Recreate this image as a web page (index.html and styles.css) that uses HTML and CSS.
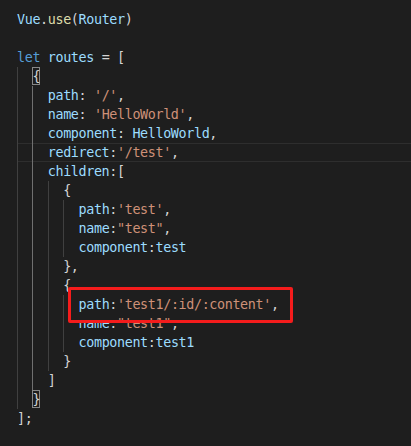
FILE: index.html
```html
<!DOCTYPE html>
<html>
<head>
<meta charset="utf-8">
<link rel="stylesheet" href="styles.css">
</head>
<body>
<div class="editor">
<div class="ln"><span class="v">Vue</span>.<span class="f">use</span>(<span class="v">Router</span>)</div>
<div class="ln"></div>
<div class="ln"><span class="k">let</span> <span class="v">routes</span> = [</div>
<div class="ln"><span class="g">  </span><span class="m">{</span></div>
<div class="ln"><span class="g">  </span><span class="g a">  </span><span class="v">path</span>: <span class="s">'/'</span>,</div>
<div class="ln"><span class="g">  </span><span class="g a">  </span><span class="v">name</span>: <span class="s">'HelloWorld'</span>,</div>
<div class="ln"><span class="g">  </span><span class="g a">  </span><span class="v">component</span>: <span class="v">HelloWorld</span>,</div>
<div class="ln cur"><span class="g">  </span><span class="g a">  </span><span class="v">redirect</span>:<span class="s">'/test'</span>,</div>
<div class="ln"><span class="g">  </span><span class="g a">  </span><span class="v">children</span>:[</div>
<div class="ln"><span class="g">  </span><span class="g a">  </span><span class="g">  </span>{</div>
<div class="ln"><span class="g">  </span><span class="g a">  </span><span class="g">  </span><span class="g">  </span><span class="v">path</span>:<span class="s">'test'</span>,</div>
<div class="ln"><span class="g">  </span><span class="g a">  </span><span class="g">  </span><span class="g">  </span><span class="v">name</span>:<span class="s">"test"</span>,</div>
<div class="ln"><span class="g">  </span><span class="g a">  </span><span class="g">  </span><span class="g">  </span><span class="v">component</span>:<span class="v">test</span></div>
<div class="ln"><span class="g">  </span><span class="g a">  </span><span class="g">  </span>},</div>
<div class="ln"><span class="g">  </span><span class="g a">  </span><span class="g">  </span>{</div>
<div class="ln"><span class="g">  </span><span class="g a">  </span><span class="g">  </span><span class="g">  </span><span class="v">path</span>:<span class="s">'test1/:id/:content'</span>,</div>
<div class="ln"><span class="g">  </span><span class="g a">  </span><span class="g">  </span><span class="g">  </span><span class="v">name</span>:<span class="s">"test1"</span>,</div>
<div class="ln"><span class="g">  </span><span class="g a">  </span><span class="g">  </span><span class="g">  </span><span class="v">component</span>:<span class="v">test1</span></div>
<div class="ln"><span class="g">  </span><span class="g a">  </span><span class="g">  </span>}</div>
<div class="ln"><span class="g">  </span><span class="g a">  </span>]</div>
<div class="ln"><span class="g">  </span><span class="m">}</span></div>
<div class="ln">];</div>
<div class="mark"></div>
</div>
</body>
</html>
```

FILE: styles.css
```css
html, body {
  margin: 0;
  padding: 0;
  background: #1e1e1e;
}
body {
  width: 411px;
  height: 446px;
  overflow: hidden;
}
.editor {
  position: relative;
  padding: 10px 0 0 17px;
  font-family: "DejaVu Sans Mono", "Liberation Mono", monospace;
  font-size: 13.4px;
  letter-spacing: -0.37px;
  color: #d4d4d4;
}
.ln {
  height: 19px;
  line-height: 19px;
  white-space: pre;
}
.cur {
  box-shadow: inset 0 1px #2e2e2e, inset 0 -1px #2e2e2e;
}
.v { color: #9cdcfe; }
.f { color: #dcdcaa; }
.k { color: #569cd6; }
.s { color: #ce9178; }
.g {
  display: inline-block;
  height: 19px;
  vertical-align: top;
  background: linear-gradient(to right, #404040 1px, transparent 1px);
}
.g.a {
  background: linear-gradient(to right, #707070 1px, transparent 1px);
}
.m {
  display: inline-block;
  height: 18px;
  vertical-align: top;
  box-shadow: inset 0 0 0 1px #888888;
}
.mark {
  position: absolute;
  left: 68px;
  top: 287px;
  width: 225px;
  height: 36px;
  box-sizing: border-box;
  border: 3px solid #f51c1c;
  border-radius: 2px;
}
```
